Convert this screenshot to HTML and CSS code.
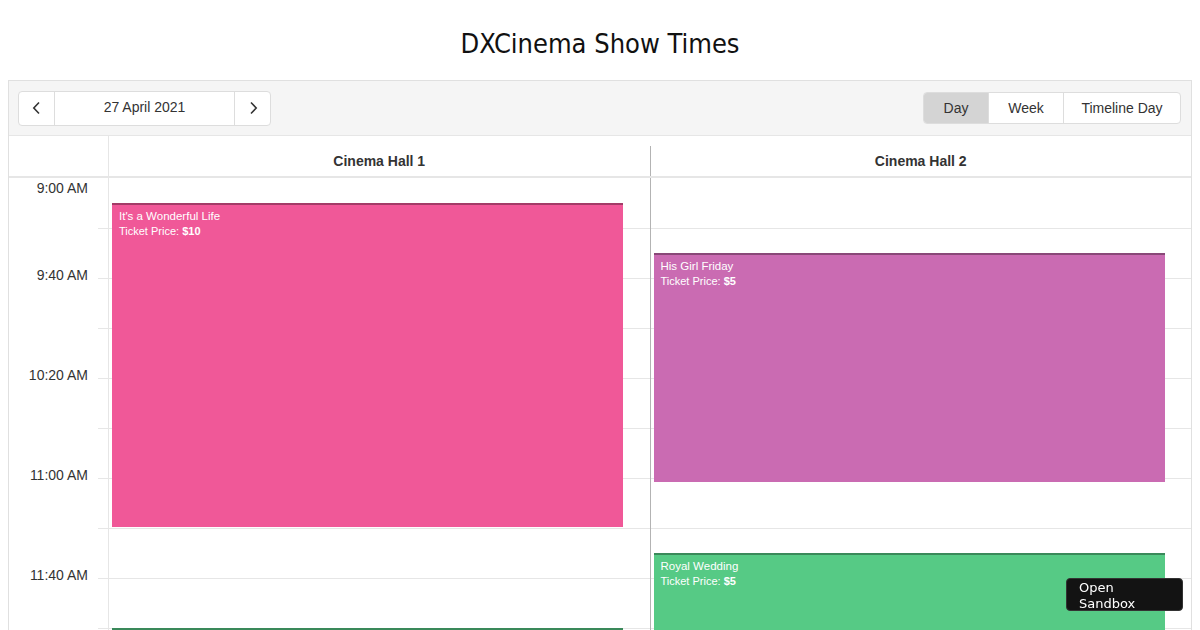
FILE: index.html
```html
<!DOCTYPE html>
<html>
<head>
<meta charset="utf-8">
<link rel="stylesheet" href="styles.css">
</head>
<body>
<h1 class="title">DXCinema Show Times</h1>
<div class="scheduler">
  <div class="toolbar">
    <div class="nav">
      <button class="nav-btn" aria-label="Previous">
        <svg width="14" height="14" viewBox="0 0 14 14"><path d="M9 1.5 L3.8 7 L9 12.5" fill="none" stroke="#333" stroke-width="1.6"/></svg>
      </button>
      <div class="nav-date">27 April 2021</div>
      <button class="nav-btn" aria-label="Next">
        <svg width="14" height="14" viewBox="0 0 14 14"><path d="M5 1.5 L10.2 7 L5 12.5" fill="none" stroke="#333" stroke-width="1.6"/></svg>
      </button>
    </div>
    <div class="views">
      <div class="view active">Day</div>
      <div class="view">Week</div>
      <div class="view">Timeline Day</div>
    </div>
  </div>
  <div class="header">
    <div class="head-time"></div>
    <div class="head-hall">Cinema Hall 1</div>
    <div class="head-hall second">Cinema Hall 2</div>
  </div>
  <div class="grid">
    <div class="time-col">
      <div class="tcell first"><span class="tlabel">9:00 AM</span></div>
      <div class="tcell"></div>
      <div class="tcell"><span class="tlabel">9:40 AM</span></div>
      <div class="tcell"></div>
      <div class="tcell"><span class="tlabel">10:20 AM</span></div>
      <div class="tcell"></div>
      <div class="tcell"><span class="tlabel">11:00 AM</span></div>
      <div class="tcell"></div>
      <div class="tcell"><span class="tlabel">11:40 AM</span></div>
      <div class="tcell"></div>
    </div>
    <div class="hall">
      <div class="cell"></div><div class="cell"></div><div class="cell"></div><div class="cell"></div><div class="cell"></div>
      <div class="cell"></div><div class="cell"></div><div class="cell"></div><div class="cell"></div><div class="cell"></div>
      <div class="appt pink" style="top:24px;height:324px">
        <div class="appt-title">It's a Wonderful Life</div>
        <div class="appt-price">Ticket Price: <b>$10</b></div>
      </div>
      <div class="appt green" style="top:449px;height:120px"></div>
    </div>
    <div class="hall second">
      <div class="cell"></div><div class="cell"></div><div class="cell"></div><div class="cell"></div><div class="cell"></div>
      <div class="cell"></div><div class="cell"></div><div class="cell"></div><div class="cell"></div><div class="cell"></div>
      <div class="appt purple" style="top:75px;height:229px">
        <div class="appt-title">His Girl Friday</div>
        <div class="appt-price">Ticket Price: <b>$5</b></div>
      </div>
      <div class="appt green" style="top:375px;height:200px">
        <div class="appt-title">Royal Wedding</div>
        <div class="appt-price">Ticket Price: <b>$5</b></div>
      </div>
    </div>
  </div>
</div>
<div class="sandbox">Open<br>Sandbox</div>
</body>
</html>
```
FILE: styles.css
```css
html, body {
  margin: 0;
  padding: 0;
  height: 630px;
  overflow: hidden;
  background: #fff;
}
body {
  padding: 0 8px;
  font-family: "Liberation Sans", Arial, sans-serif;
  color: #333;
}
.title {
  margin: 0;
  height: 80px;
  line-height: 88px;
  text-align: center;
  font-family: "DejaVu Sans Condensed", "DejaVu Sans", sans-serif;
  font-stretch: condensed;
  font-weight: normal;
  font-size: 27px;
  color: #111;
}
.scheduler {
  border: 1px solid #e0e0e0;
  border-bottom: none;
  height: 560px;
  overflow: hidden;
  box-sizing: border-box;
}
.toolbar {
  height: 55px;
  background: #f5f5f5;
  border-bottom: 1px solid #e6e6e6;
  display: flex;
  align-items: center;
  justify-content: space-between;
  padding: 0 9px;
  box-sizing: border-box;
}
.nav {
  display: flex;
  height: 35px;
  border: 1px solid #ddd;
  border-radius: 4px;
  background: #fff;
  box-sizing: border-box;
}
.nav-btn {
  width: 35px;
  border: none;
  background: transparent;
  padding: 0;
  display: flex;
  align-items: center;
  justify-content: center;
}
.nav-date {
  width: 181px;
  border-left: 1px solid #ddd;
  border-right: 1px solid #ddd;
  box-sizing: border-box;
  text-align: center;
  font-size: 14px;
  line-height: 30px;
}
.views {
  display: flex;
  height: 32px;
  border: 1px solid #ddd;
  border-radius: 4px;
  background: #fff;
  overflow: hidden;
  box-sizing: border-box;
  margin-right: 1px;
}
.view {
  font-size: 14px;
  line-height: 30px;
  text-align: center;
  border-left: 1px solid #ddd;
  box-sizing: border-box;
}
.view:nth-child(1) { width: 64px; border-left: none; }
.view:nth-child(2) { width: 75px; }
.view:nth-child(3) { width: 117px; }
.view.active {
  background: #d4d4d4;
}
.header {
  display: flex;
  align-items: flex-end;
  height: 42px;
  border-bottom: 2px solid #e6e6e6;
  box-sizing: border-box;
}
.head-time {
  width: 100px;
  height: 40px;
  border-right: 1px solid #e6e6e6;
  box-sizing: border-box;
  flex: none;
}
.head-hall {
  flex: 1;
  height: 30px;
  line-height: 30px;
  text-align: center;
  font-weight: bold;
  font-size: 14px;
  color: #333;
}
.head-hall.second {
  border-left: 1px solid #b3b3b3;
}
.grid {
  display: flex;
  padding-top: 1px;
}
.time-col {
  width: 100px;
  flex: none;
  border-right: 1px solid #e6e6e6;
  box-sizing: border-box;
  margin-top: -1px;
  padding-top: 1px;
}
.tcell {
  height: 50px;
  position: relative;
  display: flex;
  flex-direction: column;
  align-items: flex-end;
  padding-right: 20px;
}
.tcell::after {
  content: "";
  position: absolute;
  right: 0;
  bottom: 0;
  width: 10px;
  height: 1px;
  background: #e6e6e6;
}
.tlabel {
  font-size: 14px;
  line-height: 20px;
  margin-top: -14px;
  color: #333;
  white-space: nowrap;
}
.tcell.first .tlabel {
  margin-top: -1px;
}
.hall {
  flex: 1;
  position: relative;
  box-sizing: border-box;
}
.hall.second {
  border-left: 1px solid #b3b3b3;
  margin-top: -1px;
  padding-top: 1px;
}
.cell {
  height: 50px;
  border-bottom: 1px solid #e6e6e6;
  box-sizing: border-box;
}
.appt {
  position: absolute;
  left: 3px;
  right: 27px;
  box-sizing: border-box;
  border-top: 2px solid rgba(0, 0, 0, 0.32);
  padding: 4px 7px;
  color: #fff;
  font-size: 11px;
  line-height: 15px;
}
.hall.second .appt { right: 26px; }
.appt-title { font-size: 11.5px; }
.appt-price { font-size: 11px; }
.pink { background: #f05898; }
.purple { background: #ca6bb2; }
.green { background: #56ca85; }
.sandbox {
  position: fixed;
  right: 17px;
  bottom: 19px;
  width: 117px;
  height: 33px;
  box-sizing: border-box;
  background: #131313;
  border: 1px solid #333;
  border-radius: 4px;
  color: #fff;
  font-family: "DejaVu Sans", sans-serif;
  font-size: 13px;
  line-height: 16px;
  padding: 1px 12px 0;
}
```
